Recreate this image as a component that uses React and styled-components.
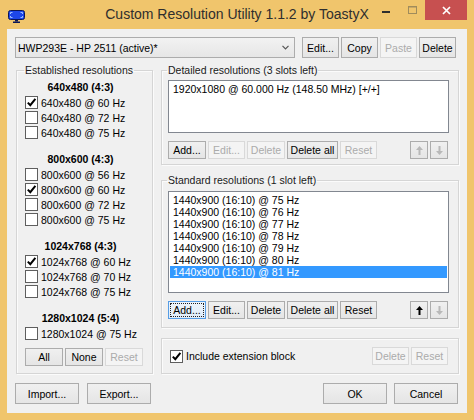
import styled, { createGlobalStyle, css } from "styled-components";

const GlobalStyle = createGlobalStyle`
  html, body {
    margin: 0;
    padding: 0;
    background: #f0c56c;
  }
  body {
    font-family: "Liberation Sans", Arial, sans-serif;
  }
`;

const Window = styled.div`
  width: 474px;
  height: 420px;
  background: #f0c56c;
  display: flex;
  flex-direction: column;
  overflow: hidden;
`;

const TitleBar = styled.div`
  height: 29px;
  flex: none;
  display: grid;
  grid-template-columns: 1fr auto 1fr;
`;

const AppIcon = styled.div`
  padding: 9px 0 0 8px;
`;

const Title = styled.div`
  font-size: 14px;
  line-height: 29px;
  color: #2e2e2e;
  white-space: nowrap;
`;

const Controls = styled.div`
  display: flex;
  justify-content: flex-end;
  align-items: flex-start;
  padding-right: 7px;
`;

const CaptionButton = styled.div`
  width: ${(p) => p.$w}px;
  height: 20px;
  display: flex;
  align-items: center;
  justify-content: center;
  background: ${(p) => p.$bg || "transparent"};
`;

const Client = styled.div`
  flex: 1;
  margin: 0 7px 7px;
  background: #f0f0f0;
  padding: 8px 8px 9px 8px;
  display: flex;
  flex-direction: column;
  box-sizing: border-box;
  font-size: 10.5px;
  color: #000;
`;

const TopRow = styled.div`
  display: flex;
  gap: 2px;
  height: 21px;
`;

const Combo = styled.div`
  width: 280px;
  height: 21px;
  margin-right: 5px;
  box-sizing: border-box;
  border: 1px solid #acacac;
  background: linear-gradient(#f2f2f2, #e6e6e6);
  display: flex;
  align-items: center;
  justify-content: space-between;
  padding: 0 5px 0 2px;
`;

const Button = styled.button`
  box-sizing: border-box;
  width: ${(p) => p.$w}px;
  height: ${(p) => p.$h || 18}px;
  flex: none;
  padding: 0;
  margin: 0;
  font-family: inherit;
  font-size: 10.5px;
  color: #000;
  border: 1px solid #acacac;
  border-radius: 0;
  background: linear-gradient(#f0f0f0, #e5e5e5);
  display: flex;
  align-items: center;
  justify-content: center;
  &:disabled {
    color: #ababab;
    border-color: #d9d9d9;
    background: #f4f4f4;
  }
  ${(p) =>
    p.$focus &&
    css`
      border-color: #569de5;
      background: linear-gradient(#eef5fc, #e0ecf9);
      outline: 1px dotted #222;
      outline-offset: -3px;
    `}
`;

const Main = styled.div`
  margin-top: 6px;
  padding-left: 1px;
  display: grid;
  grid-template-columns: 137px 1fr;
  column-gap: 8px;
`;

const Group = styled.fieldset`
  margin: 0;
  min-width: 0;
  box-sizing: border-box;
  border: 1px solid #d5d5d5;
  box-shadow: 1px 1px 0 #fbfbfb, inset 1px 1px 0 #fbfbfb;
  padding: ${(p) => p.$pad};
  display: flex;
  flex-direction: column;
`;

const Legend = styled.legend`
  padding: 0 1px;
  margin-left: -1px;
  line-height: 12px;
  font-size: 10.5px;
  color: #1a1a1a;
`;

const Section = styled.div`
  display: flex;
  flex-direction: column;
  & + & {
    margin-top: 12px;
  }
`;

const SectionTitle = styled.div`
  height: 15px;
  line-height: 15px;
  font-weight: bold;
  text-align: center;
  padding-right: 8px;
`;

const CheckRow = styled.label`
  height: 15px;
  display: flex;
  align-items: center;
  gap: 3px;
  white-space: nowrap;
`;

const Box = styled.span`
  width: 13px;
  height: 13px;
  box-sizing: border-box;
  border: 1px solid #5e5e5e;
  background: #fff;
  display: flex;
  align-items: center;
  justify-content: center;
  flex: none;
`;

const ButtonRow = styled.div`
  display: flex;
  align-items: center;
  gap: 2px;
  margin-top: ${(p) => p.$mt || 0}px;
`;

const Arrows = styled.div`
  margin-left: auto;
  margin-right: 1px;
  display: flex;
  gap: 2px;
`;

const RightColumn = styled.div`
  display: flex;
  flex-direction: column;
`;

const ListBox = styled.div`
  height: ${(p) => p.$h}px;
  box-sizing: border-box;
  background: #fff;
  border: 1px solid #828790;
  padding: 2px 1px;
  margin-bottom: 8px;
  overflow: hidden;
`;

const ListItem = styled.div`
  height: 12px;
  line-height: 12px;
  padding-left: 3px;
  white-space: nowrap;
  color: ${(p) => (p.$selected ? "#fff" : "#000")};
  background: ${(p) => (p.$selected ? "#3399ff" : "transparent")};
`;

const ExtensionBox = styled.div`
  margin-top: 10px;
  height: 36px;
  box-sizing: border-box;
  border: 1px solid #d5d5d5;
  box-shadow: 1px 1px 0 #fbfbfb, inset 1px 1px 0 #fbfbfb;
  padding: 0 10px 0 8px;
  display: flex;
  align-items: center;
  justify-content: space-between;
`;

const BottomRow = styled.div`
  margin-top: 9px;
  display: flex;
  justify-content: space-between;
  padding-right: 1px;
`;

const Pair = styled.div`
  display: flex;
  gap: ${(p) => p.$gap}px;
`;

const Check = ({ on }) => (
  <Box>
    {on && (
      <svg width="11" height="11" viewBox="0 0 11 11">
        <path d="M1.8 5.6 L4.3 8.2 L9.4 1.8" fill="none" stroke="#000" strokeWidth="2" />
      </svg>
    )}
  </Box>
);

const Arrow = ({ down, off }) => (
  <svg width="7" height="9" viewBox="0 0 7 9" style={{ transform: down ? "rotate(180deg)" : "none" }}>
    <path d="M3.5 0 L7 4 L4.5 4 L4.5 9 L2.5 9 L2.5 4 L0 4 Z" fill={off ? "#b8b8b8" : "#000"} />
  </svg>
);

const MonitorIcon = () => (
  <svg width="17" height="13" viewBox="0 0 17 13">
    <rect x="0.5" y="0.5" width="16" height="9" rx="2" fill="#1d46e8" stroke="#0b1656" />
    <path d="M2.5 4 V2.5 H4.5 M12.5 2.5 H14.5 V4 M14.5 6 V7.5 H12.5 M4.5 7.5 H2.5 V6" fill="none" stroke="#9ec0ff" strokeWidth="1" />
    <rect x="7" y="10" width="3" height="1.5" fill="#0b1656" />
    <rect x="5" y="11.5" width="7" height="1.5" fill="#0b1656" />
  </svg>
);

const established = [
  { title: "640x480 (4:3)", rows: [["640x480 @ 60 Hz", true], ["640x480 @ 72 Hz"], ["640x480 @ 75 Hz"]] },
  {
    title: "800x600 (4:3)",
    rows: [["800x600 @ 56 Hz"], ["800x600 @ 60 Hz", true], ["800x600 @ 72 Hz"], ["800x600 @ 75 Hz"]],
  },
  { title: "1024x768 (4:3)", rows: [["1024x768 @ 60 Hz", true], ["1024x768 @ 70 Hz"], ["1024x768 @ 75 Hz"]] },
  { title: "1280x1024 (5:4)", rows: [["1280x1024 @ 75 Hz"]] },
];

const standard = [75, 76, 77, 78, 79, 80, 81];

const ListButtons = ({ detailed }) => (
  <ButtonRow>
    <Button $w={38} $focus={!detailed}>Add...</Button>
    <Button $w={37} disabled={detailed}>Edit...</Button>
    <Button $w={38} disabled={detailed}>Delete</Button>
    <Button $w={51}>Delete all</Button>
    <Button $w={37} disabled={detailed}>Reset</Button>
    <Arrows>
      <Button $w={18}>
        <Arrow off={detailed} />
      </Button>
      <Button $w={18}>
        <Arrow down off />
      </Button>
    </Arrows>
  </ButtonRow>
);

const App = () => (
  <Window>
    <GlobalStyle />
    <TitleBar>
      <AppIcon>
        <MonitorIcon />
      </AppIcon>
      <Title>Custom Resolution Utility 1.1.2 by ToastyX</Title>
      <Controls>
        <CaptionButton $w={26}>
          <svg width="8" height="8" viewBox="0 0 8 8">
            <rect x="0" y="5" width="8" height="2" fill="#2e2e2e" />
          </svg>
        </CaptionButton>
        <CaptionButton $w={26}>
          <svg width="9" height="8" viewBox="0 0 9 8">
            <rect x="0.5" y="0.5" width="8" height="7" fill="none" stroke="#a08c5c" />
            <rect x="0.5" y="0.5" width="8" height="1" fill="#a08c5c" />
          </svg>
        </CaptionButton>
        <CaptionButton $w={42} $bg="#c75050">
          <svg width="9" height="9" viewBox="0 0 9 9">
            <path d="M1 1 L8 8 M8 1 L1 8" stroke="#fff" strokeWidth="1.7" />
          </svg>
        </CaptionButton>
      </Controls>
    </TitleBar>

    <Client>
      <TopRow>
        <Combo>
          <span>HWP293E - HP 2511 (active)*</span>
          <svg width="7" height="5" viewBox="0 0 7 5">
            <path d="M0.5 0.8 L3.5 3.8 L6.5 0.8" fill="none" stroke="#555" strokeWidth="1.2" />
          </svg>
        </Combo>
        <Button $w={37} $h={21}>Edit...</Button>
        <Button $w={37} $h={21}>Copy</Button>
        <Button $w={37} $h={21} disabled>Paste</Button>
        <Button $w={37} $h={21}>Delete</Button>
      </TopRow>

      <Main>
        <Group $pad="4px 8px 7px 8px">
          <Legend>Established resolutions</Legend>
          {established.map((s) => (
            <Section key={s.title}>
              <SectionTitle>{s.title}</SectionTitle>
              {s.rows.map(([label, on]) => (
                <CheckRow key={label}>
                  <Check on={on} />
                  {label}
                </CheckRow>
              ))}
            </Section>
          ))}
          <ButtonRow $mt={7}>
            <Button $w={38}>All</Button>
            <Button $w={38}>None</Button>
            <Button $w={38} disabled>Reset</Button>
          </ButtonRow>
        </Group>

        <RightColumn>
          <Group $pad="4px 9px 5px 6px">
            <Legend>Detailed resolutions (3 slots left)</Legend>
            <ListBox $h={53}>
              <ListItem>1920x1080 @ 60.000 Hz (148.50 MHz) [+/+]</ListItem>
            </ListBox>
            <ListButtons detailed />
          </Group>

          <Group $pad="5px 9px 8px 6px" style={{ marginTop: 9 }}>
            <Legend>Standard resolutions (1 slot left)</Legend>
            <ListBox $h={102}>
              {standard.map((hz) => (
                <ListItem key={hz} $selected={hz === 81}>
                  1440x900 (16:10) @ {hz} Hz
                </ListItem>
              ))}
            </ListBox>
            <ListButtons />
          </Group>

          <ExtensionBox>
            <CheckRow>
              <Check on />
              Include extension block
            </CheckRow>
            <Pair $gap={2}>
              <Button $w={37} disabled>Delete</Button>
              <Button $w={37} disabled>Reset</Button>
            </Pair>
          </ExtensionBox>
        </RightColumn>
      </Main>

      <BottomRow>
        <Pair $gap={8}>
          <Button $w={64} $h={21}>Import...</Button>
          <Button $w={64} $h={21}>Export...</Button>
        </Pair>
        <Pair $gap={7}>
          <Button $w={64} $h={21}>OK</Button>
          <Button $w={64} $h={21}>Cancel</Button>
        </Pair>
      </BottomRow>
    </Client>
  </Window>
);

export default App;
